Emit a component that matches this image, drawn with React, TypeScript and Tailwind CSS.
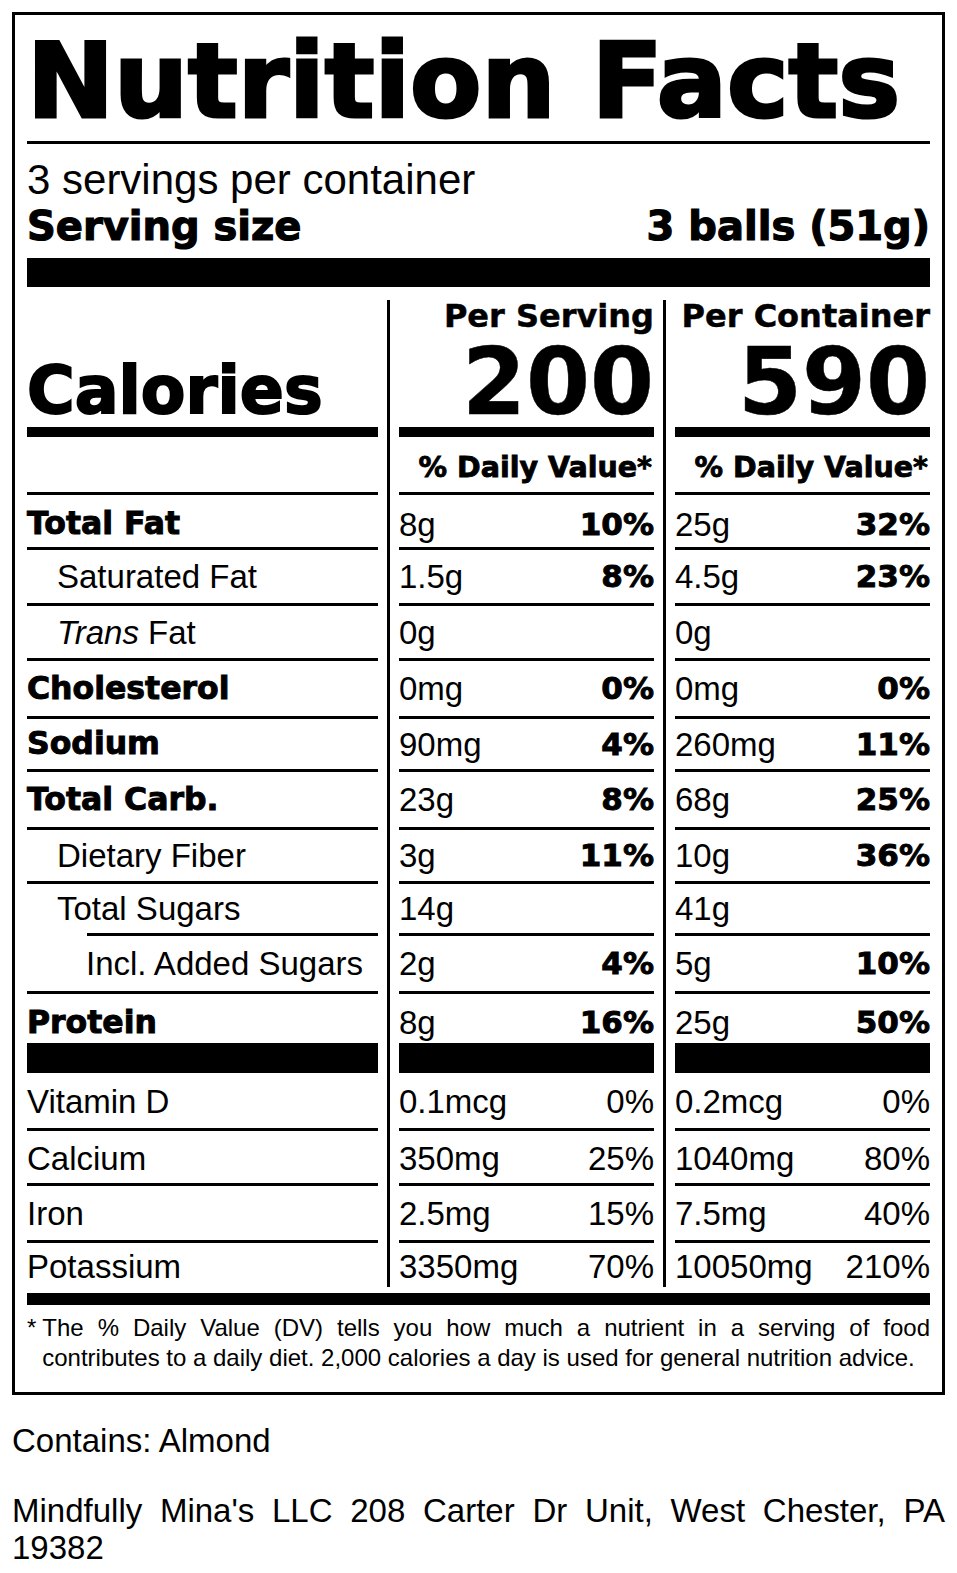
import React from 'react';

const sans = "font-['Liberation_Sans',Arial,sans-serif]";
const black = "font-['DejaVu_Sans','Liberation_Sans',sans-serif] font-bold [-webkit-text-stroke:0.03em_black]";

type Item = {
  label: React.ReactNode;
  bold?: boolean;
  pad?: string;
  h: string;
  pt?: string;
  a: string;
  ap?: string;
  b: string;
  bp?: string;
  rule?: string | null;
  ruleIndent?: boolean;
};

const main: Item[] = [
  { label: 'Total Fat', bold: true, h: 'h-[52px]', pt: 'pt-[6px]', a: '8g', ap: '10%', b: '25g', bp: '32%' },
  { label: 'Saturated Fat', pad: 'pl-[30px]', h: 'h-[53px]', a: '1.5g', ap: '8%', b: '4.5g', bp: '23%' },
  { label: <span><i>Trans</i> Fat</span>, pad: 'pl-[30px]', h: 'h-[52px]', a: '0g', b: '0g' },
  { label: 'Cholesterol', bold: true, h: 'h-[55px]', a: '0mg', ap: '0%', b: '0mg', bp: '0%' },
  { label: 'Sodium', bold: true, h: 'h-[50px]', a: '90mg', ap: '4%', b: '260mg', bp: '11%' },
  { label: 'Total Carb.', bold: true, h: 'h-[55px]', a: '23g', ap: '8%', b: '68g', bp: '25%' },
  { label: 'Dietary Fiber', pad: 'pl-[30px]', h: 'h-[51px]', a: '3g', ap: '11%', b: '10g', bp: '36%' },
  { label: 'Total Sugars', pad: 'pl-[30px]', h: 'h-[49px]', a: '14g', b: '41g', ruleIndent: true },
  { label: 'Incl. Added Sugars', pad: 'pl-[59px]', h: 'h-[55px]', a: '2g', ap: '4%', b: '5g', bp: '10%' },
  { label: 'Protein', bold: true, h: 'h-[49px]', pt: 'pt-[8px]', a: '8g', ap: '16%', b: '25g', bp: '50%', rule: 'h-[30px]' },
];

const vitamins: Item[] = [
  { label: 'Vitamin D', h: 'h-[55px]', pt: 'pt-[1px]', a: '0.1mcg', ap: '0%', b: '0.2mcg', bp: '0%' },
  { label: 'Calcium', h: 'h-[52px]', pt: 'pt-[3px]', a: '350mg', ap: '25%', b: '1040mg', bp: '80%' },
  { label: 'Iron', h: 'h-[54px]', a: '2.5mg', ap: '15%', b: '7.5mg', bp: '40%' },
  { label: 'Potassium', h: 'h-[44px]', pt: 'pt-[3px]', a: '3350mg', ap: '70%', b: '10050mg', bp: '210%', rule: null },
];

const Divider = () => <div className="w-[3px] shrink-0 self-stretch bg-black mx-[9px]" />;

function Row({ item, pctBold }: { item: Item; pctBold: boolean }) {
  const rule = item.rule === undefined ? 'h-[3px]' : item.rule;
  const pct = pctBold ? `${black} text-[31px]` : `${sans} text-[33px]`;
  const pt = item.pt ?? '';
  return (
    <div className="flex">
      <div className="w-[351px] shrink-0 flex flex-col">
        <div className={`${item.h} ${pt} flex items-center leading-none ${item.pad ?? ''} ${item.bold ? `${black} text-[31.5px]` : `${sans} text-[33px]`}`}>
          {item.label}
        </div>
        {rule && <div className={`${rule} bg-black ${item.ruleIndent ? 'ml-[60px]' : ''}`} />}
      </div>
      <Divider />
      <div className="w-[255px] shrink-0 flex flex-col">
        <div className={`${item.h} ${pt} flex items-center justify-between leading-none`}>
          <span className={`${sans} text-[33px]`}>{item.a}</span>
          <span className={pct}>{item.ap}</span>
        </div>
        {rule && <div className={`${rule} bg-black`} />}
      </div>
      <Divider />
      <div className="w-[255px] shrink-0 flex flex-col">
        <div className={`${item.h} ${pt} flex items-center justify-between leading-none`}>
          <span className={`${sans} text-[33px]`}>{item.b}</span>
          <span className={pct}>{item.bp}</span>
        </div>
        {rule && <div className={`${rule} bg-black`} />}
      </div>
    </div>
  );
}

export default function App() {
  return (
    <div className={`min-h-screen bg-white text-black px-[12px] pt-[12px] pb-[8px] ${sans}`}>
      <div className="border-[3px] border-black px-[12px]">
        <h1 className={`${black} text-[104px] leading-[120px] h-[126px] pt-[6px] whitespace-nowrap`}>Nutrition Facts</h1>
        <div className="h-[3px] bg-black" />

        <div className="pt-[13px] pb-[10px]">
          <div className="text-[42px] leading-[46px]">3 servings per container</div>
          <div className={`mt-[1px] flex justify-between text-[40px] leading-[44px] ${black}`}>
            <span>Serving size</span>
            <span>3 balls (51g)</span>
          </div>
        </div>
        <div className="h-[29px] bg-black" />
        <div className="h-[13px]" />

        {/* calories header */}
        <div className="flex">
          <div className="w-[351px] shrink-0 flex flex-col">
            <div className="h-[127px] flex items-end pb-[4px]">
              <span className={`${black} text-[65px] leading-none`}>Calories</span>
            </div>
            <div className="h-[10px] bg-black" />
          </div>
          <Divider />
          <div className="w-[255px] shrink-0 flex flex-col">
            <div className={`h-[127px] text-right ${black}`}>
              <div className="text-[32px] leading-none">Per Serving</div>
              <div className="mt-[5px] text-[92px] leading-none">200</div>
            </div>
            <div className="h-[10px] bg-black" />
          </div>
          <Divider />
          <div className="w-[255px] shrink-0 flex flex-col">
            <div className={`h-[127px] text-right ${black}`}>
              <div className="text-[32px] leading-none">Per Container</div>
              <div className="mt-[5px] text-[92px] leading-none">590</div>
            </div>
            <div className="h-[10px] bg-black" />
          </div>
        </div>

        {/* daily value header */}
        <div className="flex">
          <div className="w-[351px] shrink-0 flex flex-col">
            <div className="h-[55px]" />
            <div className="h-[3px] bg-black" />
          </div>
          <Divider />
          <div className="w-[255px] shrink-0 flex flex-col">
            <div className={`h-[55px] pt-[8px] flex items-center justify-end pr-[2px] text-[28.5px] leading-none ${black}`}>% Daily Value*</div>
            <div className="h-[3px] bg-black" />
          </div>
          <Divider />
          <div className="w-[255px] shrink-0 flex flex-col">
            <div className={`h-[55px] pt-[8px] flex items-center justify-end pr-[2px] text-[28.5px] leading-none ${black}`}>% Daily Value*</div>
            <div className="h-[3px] bg-black" />
          </div>
        </div>

        {main.map((item, i) => (
          <Row key={i} item={item} pctBold />
        ))}
        {vitamins.map((item, i) => (
          <Row key={i} item={item} pctBold={false} />
        ))}

        <div className="h-[6px]" />
        <div className="h-[12px] bg-black" />

        <p className="pt-[8px] pb-[19px] text-[24px] leading-[30px] text-justify [text-align-last:center]">
          <span className="mr-[6px]">*</span>The % Daily Value (DV) tells you how much a nutrient in a serving of food contributes to a daily diet. 2,000 calories a day is used for general nutrition advice.
        </p>
      </div>

      <p className="mt-[27px] text-[33px] leading-[37px]">Contains: Almond</p>
      <p className="mt-[33px] text-[33px] leading-[37px] text-justify">
        Mindfully Mina's LLC 208 Carter Dr Unit, West Chester, PA 19382
      </p>
    </div>
  );
}
